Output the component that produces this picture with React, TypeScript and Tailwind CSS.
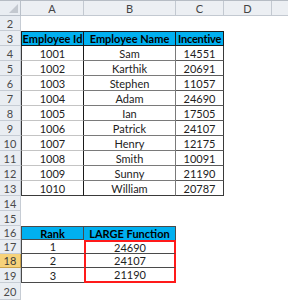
import React from "react";

const font = { fontFamily: "Lato, 'Open Sans', sans-serif" };

type RowDef = {
  n: number;
  h: string;
  a?: React.ReactNode;
  b?: React.ReactNode;
  c?: React.ReactNode;
  kind: "empty" | "head3" | "data" | "head2" | "rank";
  first?: boolean;
  last?: boolean;
  sel?: boolean;
};

const emp = [
  ["1001", "Sam", "14551"],
  ["1002", "Karthik", "20691"],
  ["1003", "Stephen", "11057"],
  ["1004", "Adam", "24690"],
  ["1005", "Ian", "17505"],
  ["1006", "Patrick", "24107"],
  ["1007", "Henry", "12175"],
  ["1008", "Smith", "10091"],
  ["1009", "Sunny", "21190"],
  ["1010", "William", "20787"],
];

const rows: RowDef[] = [
  { n: 2, h: "h-[15px]", kind: "empty" },
  { n: 3, h: "h-[15px]", kind: "head3", a: "Employee Id", b: "Employee Name", c: "Incentive" },
  ...emp.map((e, i) => ({
    n: 4 + i,
    h: "h-[15px]",
    kind: "data" as const,
    a: e[0],
    b: e[1],
    c: e[2],
    last: i === emp.length - 1,
  })),
  { n: 14, h: "h-[15px]", kind: "empty" },
  { n: 15, h: "h-[15px]", kind: "empty" },
  { n: 16, h: "h-[14px]", kind: "head2", a: "Rank", b: "LARGE Function" },
  { n: 17, h: "h-[14px]", kind: "rank", a: "1", b: "24690", first: true },
  { n: 18, h: "h-[14px]", kind: "rank", a: "2", b: "24107", sel: true },
  { n: 19, h: "h-[15px]", kind: "rank", a: "3", b: "21190", last: true },
  { n: 20, h: "h-[17px]", kind: "empty" },
];

function RowHeader({ n, sel }: { n: number; sel?: boolean }) {
  return (
    <div
      className={
        sel
          ? "w-[21px] shrink-0 h-full flex items-center justify-center border-r border-b border-[#c9a24a] bg-[#f6d27a] text-[#3a3a3a]"
          : "w-[21px] shrink-0 h-full flex items-center justify-center border-r border-b border-[#c6ccd4] bg-[#e9edf2] text-[#4a4a4a]"
      }
    >
      {n}
    </div>
  );
}

function Row({ r }: { r: RowDef }) {
  const base = "h-full shrink-0 flex items-center justify-center text-[#222]";
  let a: React.ReactNode = null;
  let b: React.ReactNode = null;
  let c: React.ReactNode = null;
  if (r.kind === "empty") {
    a = <div className={`${base} w-[63px]`} />;
    b = <div className={`${base} w-[92px]`} />;
    c = <div className={`${base} w-[48px]`} />;
  } else if (r.kind === "head3") {
    a = (
      <div className={`${base} w-[63px] bg-[#00b0f0] font-bold border-t border-b border-l border-r border-[#1a1a1a] text-black`}>
        {r.a}
      </div>
    );
    b = (
      <div className={`${base} w-[92px] bg-[#00b0f0] font-bold border-t border-b border-r border-[#1a1a1a] text-black`}>
        {r.b}
      </div>
    );
    c = (
      <div className={`${base} w-[48px] bg-[#00b0f0] font-bold border-t border-b border-r border-[#1a1a1a] text-black tracking-[-0.2px]`}>
        {r.c}
      </div>
    );
  } else if (r.kind === "data") {
    a = (
      <div className={`${base} w-[63px] border-l border-r border-l-[#3a3a3a] border-r-[#1a1a1a] border-b ${r.last ? "border-b-[#3a3a3a]" : "border-b-[#c4c4c4]"}`}>
        {r.a}
      </div>
    );
    b = (
      <div className={`${base} w-[92px] border-r border-r-[#7a7a7a] border-b ${r.last ? "border-b-[#3a3a3a]" : "border-b-[#7a7a7a]"}`}>
        {r.b}
      </div>
    );
    c = (
      <div className={`${base} w-[48px] border-r border-r-[#3a3a3a] border-b ${r.last ? "border-b-[#3a3a3a]" : "border-b-[#5a5a5a]"}`}>
        {r.c}
      </div>
    );
  } else if (r.kind === "head2") {
    a = (
      <div className={`${base} w-[63px] bg-[#00b0f0] font-bold border-t border-b border-l border-r border-[#4a4a4a] text-black`}>
        {r.a}
      </div>
    );
    b = (
      <div className={`${base} w-[92px] bg-[#00b0f0] font-bold border-t border-r border-[#4a4a4a] text-black`}>
        {r.b}
      </div>
    );
    c = <div className={`${base} w-[48px]`} />;
  } else {
    a = (
      <div className={`${base} w-[63px] border-l border-l-[#4a4a4a] border-b ${r.last ? "border-b-[#4a4a4a]" : "border-b-[#4a4a4a]"}`}>
        {r.a}
      </div>
    );
    b = (
      <div
        className={`${base} w-[92px] border-l-2 border-r-2 border-[#ff1a1a] ${r.first ? "border-t-2" : ""} ${
          r.last ? "border-b-2" : "border-b border-b-[#4a4a4a]"
        }`}
      >
        {r.b}
      </div>
    );
    c = <div className={`${base} w-[48px]`} />;
  }
  return (
    <div className={`flex ${r.h}`}>
      <RowHeader n={r.n} sel={r.sel} />
      {a}
      {b}
      {c}
      <div className="w-[48px] shrink-0 h-full" />
      <div className="flex-1 h-full" />
    </div>
  );
}

export default function App() {
  return (
    <div className="w-[288px] h-[300px] overflow-hidden bg-white text-[11px] leading-none" style={font}>
      <div className="flex h-[16px] border-t border-[#b6bcc4]">
        <div className="w-[21px] shrink-0 h-full bg-[#e9edf2] border-r border-b border-[#b9c0c9] flex items-end justify-end pr-[2px] pb-[2px]">
          <svg width="9" height="9" viewBox="0 0 9 9">
            <polygon points="9,0 9,9 0,9" fill="#c3c8cf" />
          </svg>
        </div>
        {[
          ["A", "w-[63px]"],
          ["B", "w-[92px]"],
          ["C", "w-[48px]"],
          ["D", "w-[48px]"],
        ].map(([l, w]) => (
          <div
            key={l}
            className={`${w} shrink-0 h-full bg-[#eceff3] border-r border-b border-[#c3c9d1] flex items-center justify-center text-[#444]`}
          >
            {l}
          </div>
        ))}
        <div className="flex-1 h-full bg-[#eceff3] border-b border-[#c3c9d1]" />
      </div>
      {rows.map((r) => (
        <Row key={r.n} r={r} />
      ))}
    </div>
  );
}
